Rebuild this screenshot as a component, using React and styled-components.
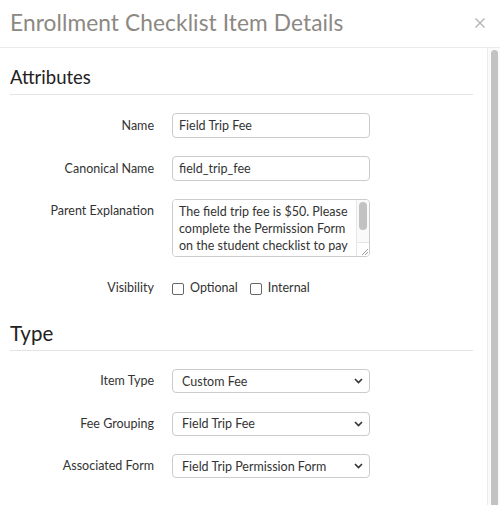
import React from "react";
import styled, { createGlobalStyle } from "styled-components";

const Global = createGlobalStyle`
  html, body { margin: 0; padding: 0; background: #fff; }
  body { font-family: Lato, "Open Sans", "Liberation Sans", sans-serif; color: #333; }
  * { box-sizing: border-box; }
`;

const Modal = styled.div`
  width: 500px;
  height: 505px;
  display: flex;
  flex-direction: column;
  overflow: hidden;
  background: #fff;
`;

const Header = styled.header`
  height: 48px;
  flex: none;
  display: flex;
  align-items: center;
  justify-content: space-between;
  padding: 0 14px 2px 10px;
  border-bottom: 1px solid #ebebeb;
`;

const Title = styled.h1`
  margin: 0;
  font-size: 22.7px;
  font-weight: 400;
  color: #8c8883;
  letter-spacing: 0.1px;
`;

const Close = styled.button`
  border: 0;
  background: none;
  padding: 0;
  width: 12px;
  height: 12px;
  display: flex;
  cursor: pointer;
`;

const BodyWrap = styled.div`
  flex: 1;
  display: flex;
  min-height: 0;
`;

const Content = styled.div`
  flex: 1;
  padding: 0 14px 0 10px;
  overflow: hidden;
`;

const Scrollbar = styled.div`
  width: 13px;
  flex: none;
  background: #fafafa;
  border-left: 1px solid #ececec;
  padding: 2px 2px 0 3px;
`;

const Thumb = styled.div`
  height: 100%;
  background: #c2c2c2;
  border-radius: 4px 4px 0 0;
`;

const Section = styled.section`
  display: flex;
  flex-direction: column;
  margin-top: ${(p) => p.$top}px;
`;

const SectionHeading = styled.h2`
  margin: 0;
  font-weight: 400;
  color: #222;
  font-size: ${(p) => p.$size}px;
  line-height: ${(p) => p.$lh}px;
  padding-bottom: ${(p) => p.$pb}px;
  border-bottom: 1px solid #e3e3e3;
`;

const Rows = styled.div`
  display: flex;
  flex-direction: column;
  gap: ${(p) => p.$gap}px;
  margin-top: 18px;
`;

const Row = styled.div`
  display: grid;
  grid-template-columns: 144px 198px;
  column-gap: 18px;
  align-items: ${(p) => (p.$top ? "start" : "center")};
`;

const Label = styled.label`
  text-align: right;
  font-size: 12.5px;
  color: #333;
  padding-top: ${(p) => (p.$top ? "5px" : "0")};
  margin-top: -1px;
`;

const TextInput = styled.input`
  height: 25px;
  width: 198px;
  border: 1px solid #cbcbcb;
  border-radius: 4px;
  padding: 0 6px;
  font: inherit;
  font-size: 12.5px;
  color: #333;
  background: #fff;
`;

const AreaBox = styled.div`
  width: 198px;
  height: 58px;
  border: 1px solid #cbcbcb;
  border-radius: 4px;
  display: flex;
  overflow: hidden;
`;

const Area = styled.textarea`
  flex: 1;
  border: 0;
  resize: none;
  overflow: hidden;
  padding: 3px 0 0 6px;
  font: inherit;
  font-size: 12.5px;
  line-height: 17px;
  color: #333;
  outline: none;
`;

const AreaScroll = styled.div`
  width: 13px;
  flex: none;
  border-left: 1px solid #e6e6e6;
  background: #fafafa;
  display: flex;
  flex-direction: column;
  padding: 2px 2px 0 2px;
`;

const AreaThumb = styled.div`
  height: 28px;
  background: #c2c2c2;
  border-radius: 4px;
`;

const Grip = styled.div`
  margin-top: auto;
  margin-left: -2px;
  margin-right: -2px;
  height: 14px;
  border-top: 1px solid #e6e6e6;
  display: flex;
  align-items: flex-end;
  justify-content: flex-end;
  background: #fff;
`;

const Checks = styled.div`
  display: flex;
  align-items: center;
  gap: 12px;
  height: 25px;
`;

const CheckLabel = styled.label`
  display: flex;
  align-items: center;
  gap: 6px;
  font-size: 12.5px;
  color: #333;
`;

const Box = styled.input`
  appearance: none;
  margin: 3px 0 0 0;
  width: 12px;
  height: 12px;
  border: 1px solid #666;
  border-radius: 2px;
  background: #fff;
`;

const SelectWrap = styled.div`
  position: relative;
  width: 198px;
  height: 24px;
`;

const Select = styled.select`
  appearance: none;
  width: 100%;
  height: 100%;
  border: 1px solid #cbcbcb;
  border-radius: 4px;
  padding: 0 20px 0 9px;
  font: inherit;
  font-size: 12.5px;
  color: #333;
  background: #fff;
`;

const Chevron = styled.svg`
  position: absolute;
  right: 7px;
  top: 50%;
  margin-top: -3px;
  pointer-events: none;
`;

function Field({ label, value }) {
  return (
    <Row>
      <Label>{label}</Label>
      <TextInput defaultValue={value} />
    </Row>
  );
}

function SelectField({ label, value }) {
  return (
    <Row>
      <Label>{label}</Label>
      <SelectWrap>
        <Select defaultValue={value}>
          <option>{value}</option>
        </Select>
        <Chevron width="9" height="6" viewBox="0 0 9 6">
          <path d="M1 1 L4.5 4.5 L8 1" fill="none" stroke="#333" strokeWidth="1.6" />
        </Chevron>
      </SelectWrap>
    </Row>
  );
}

export default function App() {
  return (
    <Modal>
      <Global />
      <Header>
        <Title>Enrollment Checklist Item Details</Title>
        <Close aria-label="Close">
          <svg width="12" height="12" viewBox="0 0 12 12">
            <path d="M1.5 1.5 L10.5 10.5 M10.5 1.5 L1.5 10.5" stroke="#b3b3b3" strokeWidth="1.4" />
          </svg>
        </Close>
      </Header>
      <BodyWrap>
        <Content>
          <Section $top={16}>
            <SectionHeading $size={18.5} $lh={26} $pb={4}>Attributes</SectionHeading>
            <Rows $gap={18}>
              <Field label="Name" value="Field Trip Fee" />
              <Field label="Canonical Name" value="field_trip_fee" />
              <Row $top>
                <Label $top>Parent Explanation</Label>
                <AreaBox>
                  <Area
                    readOnly
                    defaultValue="The field trip fee is $50. Please complete the Permission Form on the student checklist to pay the fee."
                  />
                  <AreaScroll>
                    <AreaThumb />
                    <Grip>
                      <svg width="9" height="9" viewBox="0 0 9 9">
                        <path d="M8 2 L2 8 M8 5 L5 8" stroke="#999" strokeWidth="1" />
                      </svg>
                    </Grip>
                  </AreaScroll>
                </AreaBox>
              </Row>
              <Row>
                <Label>Visibility</Label>
                <Checks>
                  <CheckLabel>
                    <Box type="checkbox" />
                    Optional
                  </CheckLabel>
                  <CheckLabel>
                    <Box type="checkbox" />
                    Internal
                  </CheckLabel>
                </Checks>
              </Row>
            </Rows>
          </Section>
          <Section $top={19}>
            <SectionHeading $size={20.5} $lh={28} $pb={3}>Type</SectionHeading>
            <Rows $gap={18.5}>
              <SelectField label="Item Type" value="Custom Fee" />
              <SelectField label="Fee Grouping" value="Field Trip Fee" />
              <SelectField label="Associated Form" value="Field Trip Permission Form" />
            </Rows>
          </Section>
        </Content>
        <Scrollbar>
          <Thumb />
        </Scrollbar>
      </BodyWrap>
    </Modal>
  );
}
